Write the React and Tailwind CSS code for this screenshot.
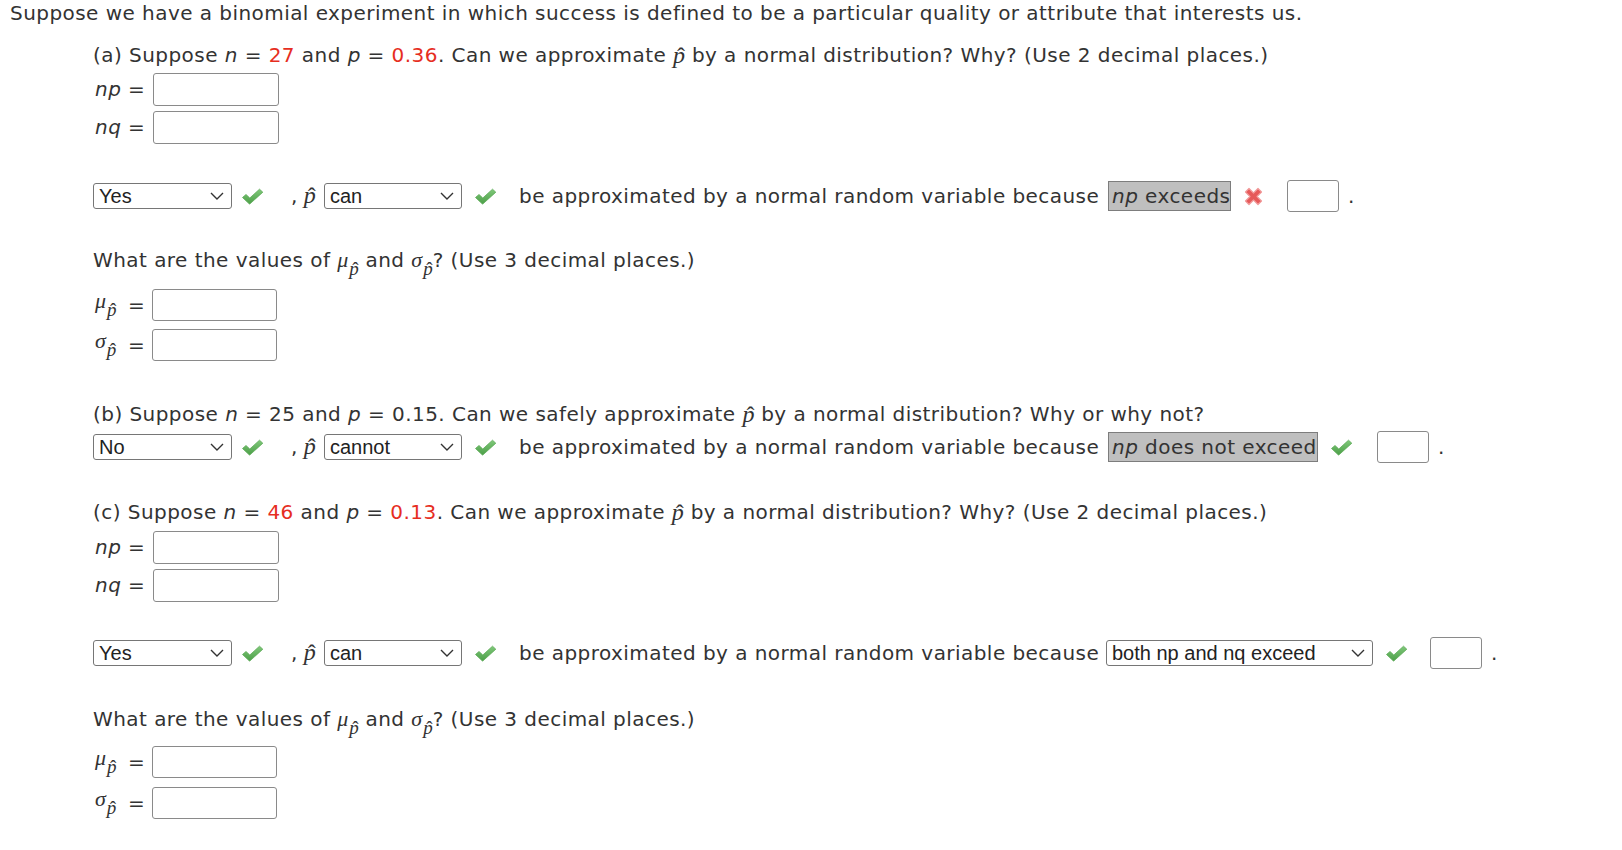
import React from "react";

const RED = "text-[#e62e1f]";

function Check({ className = "" }) {
  return (
    <svg width="23" height="17" viewBox="0 0 23 17" className={className}>
      <defs>
        <linearGradient id="ck" x1="0" y1="0" x2="0" y2="1">
          <stop offset="0" stopColor="#80c87a" />
          <stop offset="1" stopColor="#4c9f48" />
        </linearGradient>
      </defs>
      <path
        d="M1.5 9.5 L5 6.5 L8.8 10 L18.5 1.2 L21.8 4.2 L9 15.8 Q8.6 16.2 8.2 15.8 Z"
        fill="url(#ck)"
        stroke="#5aa955"
        strokeWidth="0.8"
        strokeLinejoin="round"
      />
    </svg>
  );
}

function Cross({ className = "" }) {
  return (
    <svg width="21" height="21" viewBox="0 0 21 21" className={className}>
      <path
        d="M2.5 6 L6 2.5 L10.5 7 L15 2.5 L18.5 6 L14 10.5 L18.5 15 L15 18.5 L10.5 14 L6 18.5 L2.5 15 L7 10.5 Z"
        fill="#e65a5a"
        stroke="#f19a9a"
        strokeWidth="1.2"
        strokeLinejoin="round"
      />
    </svg>
  );
}

function PHat({ small }) {
  return (
    <span
      className={`relative inline-block font-['Liberation_Serif',serif] italic tracking-normal ${
        small ? "text-[19px] leading-none" : "text-[24px] leading-none"
      }`}
    >
      p
      <span
        className={`absolute not-italic ${small ? "left-[3px] top-[0px]" : "left-[4px] top-[1px]"}`}
      >
        ˆ
      </span>
    </span>
  );
}

function Sym({ ch }) {
  return (
    <span className="inline-flex items-baseline tracking-normal">
      <span className="font-['Liberation_Serif',serif] italic text-[22px] leading-none">{ch}</span>
      <span className="relative top-[8px] ml-[1px]">
        <PHat small />
      </span>
    </span>
  );
}

function Select({ value, w }) {
  return (
    <div
      className={`${w} h-[26px] flex items-center justify-between border border-[#767676] rounded-[3px] pl-[5px] pr-[7px] font-['Liberation_Sans',Arial,sans-serif] text-[20px] tracking-normal text-[#222] bg-white whitespace-nowrap`}
    >
      <span>{value}</span>
      <svg width="14" height="8" viewBox="0 0 14 8">
        <path d="M1 1 L7 7 L13 1" fill="none" stroke="#333" strokeWidth="1.4" />
      </svg>
    </div>
  );
}

function Box({ w = "w-[126px]", h = "h-[33px]" }) {
  return <div className={`${w} ${h} border border-[#8a8a8a] rounded-[3px] bg-white`} />;
}

function VarRow({ label, mt }) {
  return (
    <div className={`flex items-center h-[34px] ${mt}`}>
      <span className="w-[35px] pl-[2px] italic">{label}</span>
      <span className="w-[25px]">=</span>
      <Box />
    </div>
  );
}

function SymRow({ ch, mt }) {
  return (
    <div className={`flex items-center h-[33px] ${mt}`}>
      <span className="w-[35px] pl-[2px] relative -top-[4px]">
        <Sym ch={ch} />
      </span>
      <span className="w-[24px]">=</span>
      <Box w="w-[125px]" h="h-[32px]" />
    </div>
  );
}

function AnswerRow({ mt, first, second, reason, reasonGap, mark, tailGap }) {
  return (
    <div className={`flex items-center h-[34px] ${mt}`}>
      <Select value={first} w="w-[139px]" />
      <Check className="ml-[9px]" />
      <span className="w-[60px] pl-[27px] flex items-baseline">
        <span>,</span>
        <span className="ml-[6px]">
          <PHat />
        </span>
      </span>
      <Select value={second} w="w-[138px]" />
      <Check className="ml-[12px]" />
      <span className="ml-[22px] w-[579px] whitespace-nowrap">be approximated by a normal random variable because</span>
      <span className={reasonGap}>{reason}</span>
      <span className={tailGap}>{mark}</span>
      <Box w="w-[52px]" h="h-[32px]" />
      <span className="ml-[9px]">.</span>
    </div>
  );
}

function GrayReason({ children, w }) {
  return (
    <span
      className={`${w} h-[30px] flex items-center px-[3px] bg-[#bfbfbf] border border-[#7d7d7d] whitespace-nowrap`}
    >
      {children}
    </span>
  );
}

export default function App() {
  return (
    <div className="w-[1622px] h-[850px] bg-white text-[#333] font-['DejaVu_Sans',Verdana,sans-serif] text-[20px] tracking-[0.45px] pl-[10px]">
      <div className="h-[26px] flex items-center whitespace-nowrap">
        Suppose we have a binomial experiment in which success is defined to be a particular quality or attribute that
        interests us.
      </div>

      <div className="pl-[83px]">
        {/* (a) */}
        <div className="h-[28px] mt-[15px] flex items-center whitespace-nowrap">
          (a) Suppose&nbsp;<i>n</i>&nbsp;=&nbsp;<span className={RED}>27</span>&nbsp;and&nbsp;<i>p</i>&nbsp;=&nbsp;
          <span className={RED}>0.36</span>. Can we approximate&nbsp;<PHat />&nbsp;by a normal distribution? Why? (Use 2
          decimal places.)
        </div>
        <VarRow label="np" mt="mt-[3px]" />
        <VarRow label="nq" mt="mt-[4px]" />

        <AnswerRow
          mt="mt-[35px]"
          first="Yes"
          second="can"
          reasonGap="ml-[10px]"
          reason={
            <GrayReason w="w-[123px]">
              <i>np</i>&nbsp;exceeds
            </GrayReason>
          }
          mark={<Cross />}
          tailGap="ml-[12px] mr-[23px]"
        />

        <div className="h-[28px] mt-[33px] flex items-center whitespace-nowrap">
          What are the values of&nbsp;<Sym ch="μ" />&nbsp;and&nbsp;<Sym ch="σ" />? (Use 3 decimal places.)
        </div>
        <SymRow ch="μ" mt="mt-[14px]" />
        <SymRow ch="σ" mt="mt-[7px]" />

        {/* (b) */}
        <div className="h-[28px] mt-[39px] flex items-center whitespace-nowrap">
          (b) Suppose&nbsp;<i>n</i>&nbsp;= 25 and&nbsp;<i>p</i>&nbsp;= 0.15. Can we safely approximate&nbsp;<PHat />
          &nbsp;by a normal distribution? Why or why not?
        </div>
        <AnswerRow
          mt="mt-[2px]"
          first="No"
          second="cannot"
          reasonGap="ml-[10px]"
          reason={
            <GrayReason w="w-[210px]">
              <i>np</i>&nbsp;does not exceed
            </GrayReason>
          }
          mark={<Check />}
          tailGap="ml-[12px] mr-[24px]"
        />

        {/* (c) */}
        <div className="h-[28px] mt-[34px] flex items-center whitespace-nowrap">
          (c) Suppose&nbsp;<i>n</i>&nbsp;=&nbsp;<span className={RED}>46</span>&nbsp;and&nbsp;<i>p</i>&nbsp;=&nbsp;
          <span className={RED}>0.13</span>. Can we approximate&nbsp;<PHat />&nbsp;by a normal distribution? Why? (Use 2
          decimal places.)
        </div>
        <VarRow label="np" mt="mt-[4px]" />
        <VarRow label="nq" mt="mt-[4px]" />

        <AnswerRow
          mt="mt-[34px]"
          first="Yes"
          second="can"
          reasonGap="ml-[8px]"
          reason={<Select value="both np and nq exceed" w="w-[267px]" />}
          mark={<Check />}
          tailGap="ml-[12px] mr-[22px]"
        />

        <div className="h-[28px] mt-[35px] flex items-center whitespace-nowrap">
          What are the values of&nbsp;<Sym ch="μ" />&nbsp;and&nbsp;<Sym ch="σ" />? (Use 3 decimal places.)
        </div>
        <SymRow ch="μ" mt="mt-[12px]" />
        <SymRow ch="σ" mt="mt-[8px]" />
      </div>
    </div>
  );
}
